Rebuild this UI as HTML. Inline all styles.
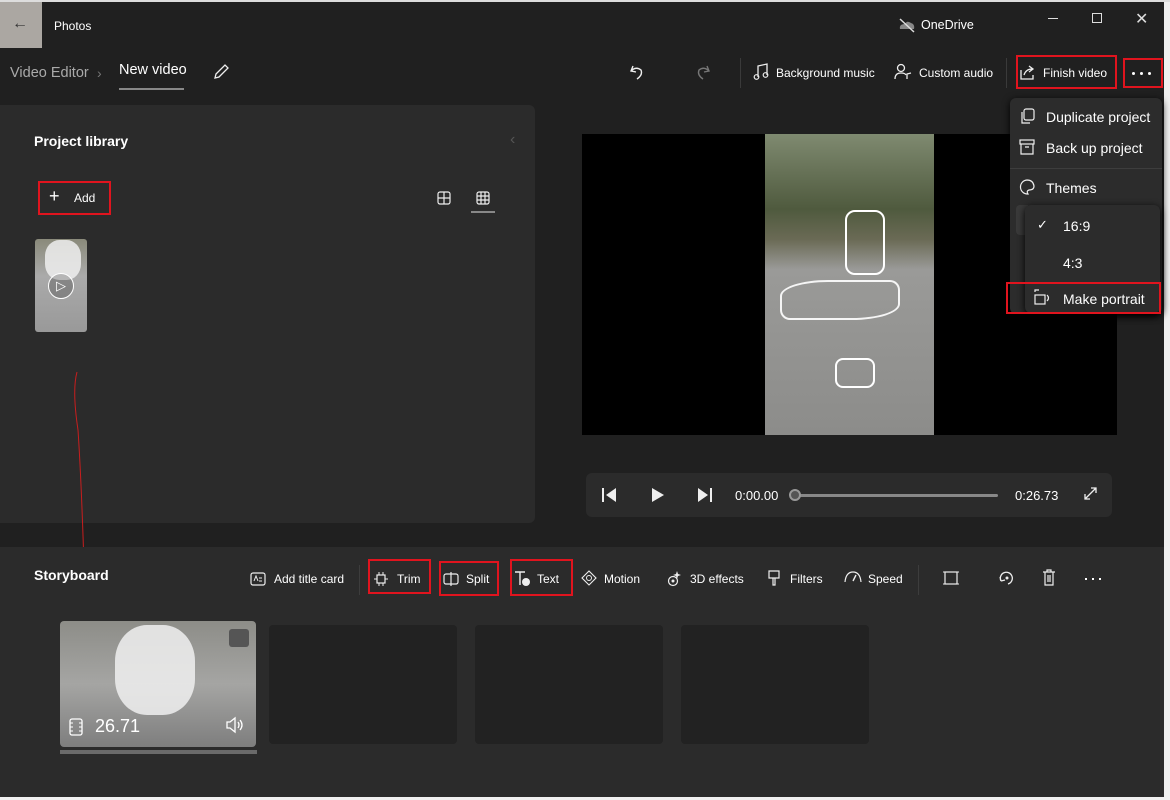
<!DOCTYPE html>
<html><head><meta charset="utf-8"><style>
*{margin:0;padding:0;box-sizing:border-box}
body{width:1170px;height:800px;background:#f0f0f0;font-family:"Liberation Sans",sans-serif;color:#fff;position:relative;overflow:hidden}
.win{position:absolute;left:0;top:2px;width:1164px;height:795px;background:#202020}
.a{position:absolute}
.t{position:absolute;font-size:12px;white-space:nowrap}
.red{position:absolute;border:2px solid #e0141e}
svg{position:absolute}
</style></head><body>
<div class="win"></div>
<div class="a" style="left:0;top:0;width:1170px;height:2px;background:#ddd"></div>
<div class="a" style="left:0;top:2px;width:42px;height:46px;background:#aba7a2"></div>
<div class="t" style="left:12px;top:15px;font-size:16px;color:#333">←</div>
<div class="t" style="left:54px;top:19px;font-size:12px">Photos</div>
<svg style="left:898px;top:17px" width="18" height="16"><path d="M2 12 Q1 7 7 7 Q9 3 13 6 Q17 7 16 12Z" fill="#888"/><line x1="2" y1="2" x2="16" y2="15" stroke="#ddd" stroke-width="1.5"/></svg>
<div class="t" style="left:921px;top:18px;font-size:12.5px">OneDrive</div>
<div class="a" style="left:1048px;top:18px;width:10px;height:1px;background:#ddd"></div>
<div class="a" style="left:1092px;top:13px;width:10px;height:10px;border:1px solid #ddd"></div>
<div class="t" style="left:1135px;top:9px;font-size:16px;color:#ddd">✕</div>
<div class="t" style="left:10px;top:65px;font-size:14.5px;color:#aaa">Video Editor</div>
<div class="t" style="left:97px;top:65px;font-size:14px;color:#777">›</div>
<div class="t" style="left:119px;top:62px;font-size:14.5px">New video</div>
<div class="a" style="left:119px;top:88px;width:65px;height:2px;background:#888"></div>
<svg style="left:212px;top:63px" width="18" height="18"><path d="M3 15 L4 11 L13 2 L16 5 L7 14Z" fill="none" stroke="#eee" stroke-width="1.3"/></svg>
<svg style="left:628px;top:63px" width="18" height="18"><path d="M5 3 L3 8 L8 9 M3 8 Q8 3 13 7 Q15 12 9 16" fill="none" stroke="#eee" stroke-width="1.4"/></svg>
<svg style="left:694px;top:63px" width="18" height="18"><path d="M13 3 L15 8 L10 9 M15 8 Q10 3 5 7 Q3 12 9 16" fill="none" stroke="#777" stroke-width="1.4"/></svg>
<div class="a" style="left:740px;top:58px;width:1px;height:30px;background:#3a3a3a"></div>
<svg style="left:753px;top:63px" width="16" height="18"><path d="M5 14 V3 L14 1 V12" fill="none" stroke="#eee" stroke-width="1.3"/><circle cx="3.5" cy="14" r="2.3" fill="none" stroke="#eee" stroke-width="1.2"/><circle cx="12.5" cy="12" r="2.3" fill="none" stroke="#eee" stroke-width="1.2"/></svg>
<div class="t" style="left:776px;top:66px">Background music</div>
<svg style="left:894px;top:63px" width="18" height="18"><circle cx="7" cy="5" r="3.5" fill="none" stroke="#eee" stroke-width="1.3"/><path d="M1 16 Q1 10 7 10 Q11 10 12 12" fill="none" stroke="#eee" stroke-width="1.3"/><path d="M13 16 V11 L17 10" fill="none" stroke="#eee" stroke-width="1.3"/></svg>
<div class="t" style="left:919px;top:66px">Custom audio</div>
<div class="a" style="left:1006px;top:58px;width:1px;height:30px;background:#3a3a3a"></div>
<div class="red" style="left:1016px;top:55px;width:101px;height:34px"></div>
<svg style="left:1019px;top:64px" width="17" height="17"><path d="M2 6 V15 H14 V11 M5 11 Q7 5 13 5 M10 2 L14 5 L10 8" fill="none" stroke="#eee" stroke-width="1.3"/></svg>
<div class="t" style="left:1043px;top:66px">Finish video</div>
<div class="red" style="left:1123px;top:58px;width:40px;height:30px"></div>
<div class="a" style="left:1132px;top:72px;width:3px;height:3px;background:#fff;border-radius:50%"></div>
<div class="a" style="left:1140px;top:72px;width:3px;height:3px;background:#fff;border-radius:50%"></div>
<div class="a" style="left:1148px;top:72px;width:3px;height:3px;background:#fff;border-radius:50%"></div>

<div class="a" style="left:0;top:105px;width:535px;height:418px;background:#2b2b2b;border-radius:0 6px 6px 0"></div>
<div class="t" style="left:34px;top:133px;font-size:14px;font-weight:bold">Project library</div>
<div class="t" style="left:510px;top:131px;font-size:16px;color:#555">‹</div>
<div class="red" style="left:38px;top:181px;width:73px;height:34px"></div>
<div class="t" style="left:49px;top:186px;font-size:18px">+</div>
<div class="t" style="left:74px;top:191px">Add</div>
<svg style="left:437px;top:191px" width="14" height="14"><rect x="1" y="1" width="12" height="12" rx="2" fill="none" stroke="#eee" stroke-width="1.2"/><path d="M7 1V13M1 7H13" stroke="#eee" stroke-width="1.2"/></svg>
<svg style="left:476px;top:191px" width="14" height="14"><rect x="1" y="1" width="12" height="12" rx="2" fill="none" stroke="#eee" stroke-width="1.2"/><path d="M5 1V13M9 1V13M1 5H13M1 9H13" stroke="#eee" stroke-width="1.2"/></svg>
<div class="a" style="left:471px;top:211px;width:24px;height:2px;background:#888"></div>
<div class="a" style="left:35px;top:239px;width:52px;height:93px;background:linear-gradient(#8a8a7a,#aaa 40%,#999);border-radius:3px"></div>
<div class="a" style="left:45px;top:240px;width:36px;height:40px;background:#eee;border-radius:40%;opacity:.85"></div>
<div class="a" style="left:48px;top:273px;width:26px;height:26px;border-radius:50%;border:1.5px solid #fff;background:rgba(0,0,0,.2)"></div>
<div class="t" style="left:56px;top:278px;font-size:13px">▷</div>
<svg style="left:60px;top:370px" width="70" height="250"><path d="M17 2 Q12 20 18 60 Q22 120 25 230 Q20 245 10 230 M25 240 Q45 225 65 215" fill="none" stroke="#c81e1e" stroke-width="1"/></svg>

<div class="a" style="left:582px;top:134px;width:535px;height:301px;background:#000"></div>
<div class="a" style="left:765px;top:134px;width:169px;height:301px;background:linear-gradient(#7f8a70 0%,#4f5a3e 25%,#6a6a55 35%,#9a9a98 45%,#8c8c8a 100%)"></div>
<div class="a" style="left:780px;top:280px;width:120px;height:40px;border:2px solid #fff;border-radius:40% 10px;opacity:.9"></div>
<div class="a" style="left:845px;top:210px;width:40px;height:65px;border:2px solid #fff;border-radius:10px"></div>
<div class="a" style="left:835px;top:358px;width:40px;height:30px;border:2px solid #fff;border-radius:8px"></div>
<div class="a" style="left:586px;top:473px;width:526px;height:44px;background:#2b2b2b;border-radius:6px"></div>
<svg style="left:601px;top:487px" width="16" height="16"><path d="M2 1V15" stroke="#eee" stroke-width="2"/><path d="M15 1 L5 8 L15 15Z" fill="#eee"/></svg>
<svg style="left:650px;top:487px" width="16" height="16"><path d="M2 1 L14 8 L2 15Z" fill="#eee"/></svg>
<svg style="left:697px;top:487px" width="16" height="16"><path d="M14 1V15" stroke="#eee" stroke-width="2"/><path d="M1 1 L11 8 L1 15Z" fill="#eee"/></svg>
<div class="t" style="left:735px;top:488px;font-size:13px">0:00.00</div>
<div class="a" style="left:796px;top:494px;width:202px;height:3px;background:#888;border-radius:2px"></div>
<div class="a" style="left:789px;top:489px;width:12px;height:12px;background:#555;border-radius:50%;border:2px solid #999"></div>
<div class="t" style="left:1015px;top:488px;font-size:13px">0:26.73</div>
<svg style="left:1083px;top:486px" width="15" height="15"><path d="M2 13 L13 2 M8 2H13V7 M2 8V13H7" fill="none" stroke="#eee" stroke-width="1.3"/></svg>

<div class="a" style="left:1010px;top:98px;width:152px;height:216px;background:#2c2c2c;border-radius:6px;box-shadow:0 2px 8px #000"></div>
<svg style="left:1019px;top:108px" width="16" height="16"><rect x="5" y="1" width="10" height="11" rx="2" fill="none" stroke="#eee" stroke-width="1.2"/><path d="M3 4 V15 H11" fill="none" stroke="#eee" stroke-width="1.2"/></svg>
<div class="t" style="left:1046px;top:109px;font-size:14px">Duplicate project</div>
<svg style="left:1019px;top:139px" width="16" height="16"><rect x="1" y="1" width="14" height="4" fill="none" stroke="#eee" stroke-width="1.2"/><path d="M2 5 V15 H14 V5 M6 8H10" fill="none" stroke="#eee" stroke-width="1.2"/></svg>
<div class="t" style="left:1046px;top:140px;font-size:14px">Back up project</div>
<div class="a" style="left:1010px;top:168px;width:152px;height:1px;background:#3d3d3d"></div>
<svg style="left:1019px;top:179px" width="16" height="16"><path d="M8 1 A7 7 0 1 0 9 15 Q7 12 10 11 Q15 11 15 7 Q14 1 8 1Z" fill="none" stroke="#eee" stroke-width="1.2"/></svg>
<div class="t" style="left:1046px;top:180px;font-size:14px">Themes</div>
<div class="a" style="left:1016px;top:205px;width:12px;height:30px;background:#3a3a3a;border-radius:4px 0 0 4px"></div>
<div class="a" style="left:1025px;top:205px;width:135px;height:108px;background:#2c2c2c;border-radius:6px;box-shadow:0 2px 8px #000"></div>
<div class="t" style="left:1037px;top:217px;font-size:13px">✓</div>
<div class="t" style="left:1063px;top:218px;font-size:14px">16:9</div>
<div class="t" style="left:1063px;top:255px;font-size:14px">4:3</div>
<div class="red" style="left:1006px;top:282px;width:155px;height:32px"></div>
<svg style="left:1034px;top:289px" width="18" height="16"><rect x="1" y="6" width="10" height="9" fill="none" stroke="#eee" stroke-width="1.2"/><path d="M1 3 V1 H5 M13 6 Q16 9 13 12" fill="none" stroke="#eee" stroke-width="1.2"/></svg>
<div class="t" style="left:1063px;top:291px;font-size:14px">Make portrait</div>

<div class="a" style="left:0;top:547px;width:1164px;height:250px;background:#2b2b2b"></div>
<div class="t" style="left:34px;top:567px;font-size:14px;font-weight:bold">Storyboard</div>
<svg style="left:250px;top:572px" width="16" height="14"><rect x="1" y="1" width="14" height="12" rx="2" fill="none" stroke="#eee" stroke-width="1.2"/><path d="M4 9 L6 4 L8 9 M9 6H12M9 9H12" fill="none" stroke="#eee" stroke-width="1"/></svg>
<div class="t" style="left:274px;top:572px">Add title card</div>
<div class="a" style="left:359px;top:565px;width:1px;height:30px;background:#3d3d3d"></div>
<div class="red" style="left:368px;top:559px;width:63px;height:35px"></div>
<svg style="left:373px;top:571px" width="16" height="16"><rect x="4" y="4" width="8" height="8" fill="none" stroke="#eee" stroke-width="1.2"/><path d="M1 8H4M12 8H15M6 1V4M10 1V4M6 12V15M10 12V15" stroke="#eee" stroke-width="1"/></svg>
<div class="t" style="left:397px;top:572px">Trim</div>
<div class="red" style="left:439px;top:561px;width:60px;height:35px"></div>
<svg style="left:443px;top:571px" width="16" height="16"><rect x="1" y="3" width="14" height="10" rx="2" fill="none" stroke="#eee" stroke-width="1.2"/><path d="M8 1V15" stroke="#eee" stroke-width="1.2"/></svg>
<div class="t" style="left:466px;top:572px">Split</div>
<div class="red" style="left:510px;top:559px;width:63px;height:37px"></div>
<svg style="left:514px;top:570px" width="18" height="18"><path d="M1 2H11M6 2V15" stroke="#eee" stroke-width="1.4"/><circle cx="12" cy="12" r="4" fill="#eee"/></svg>
<div class="t" style="left:537px;top:572px">Text</div>
<svg style="left:581px;top:570px" width="16" height="16"><path d="M8 1 L15 8 L8 15 L1 8Z" fill="none" stroke="#eee" stroke-width="1.1"/><circle cx="8" cy="8" r="2.5" fill="none" stroke="#eee"/></svg>
<div class="t" style="left:604px;top:572px">Motion</div>
<svg style="left:667px;top:569px" width="16" height="18"><circle cx="6" cy="12" r="4.5" fill="none" stroke="#eee" stroke-width="1.2"/><circle cx="6" cy="12" r="1.5" fill="#eee"/><path d="M10 2 L11 5 L14 6 L11 7 L10 10 L9 7 L6 6 L9 5Z" fill="#eee"/></svg>
<div class="t" style="left:690px;top:572px">3D effects</div>
<svg style="left:767px;top:570px" width="14" height="17"><path d="M2 1H12V8H2Z M6 8V15H8V8" fill="none" stroke="#eee" stroke-width="1.2"/></svg>
<div class="t" style="left:790px;top:572px">Filters</div>
<svg style="left:844px;top:570px" width="18" height="14"><path d="M1 12 Q2 2 9 2 Q16 2 17 12" fill="none" stroke="#eee" stroke-width="1.2"/><path d="M9 11 L12 5" stroke="#eee" stroke-width="1.4"/></svg>
<div class="t" style="left:868px;top:572px">Speed</div>
<div class="a" style="left:918px;top:565px;width:1px;height:30px;background:#3d3d3d"></div>
<svg style="left:942px;top:569px" width="18" height="18"><rect x="3" y="3" width="12" height="12" fill="none" stroke="#eee" stroke-width="1.2"/><path d="M1 3H17M1 15H17" stroke="#eee"/></svg>
<svg style="left:997px;top:569px" width="18" height="18"><path d="M4 12 A6 6 0 1 1 11 15 M4 12 L3 8 M4 12 L8 11" fill="none" stroke="#eee" stroke-width="1.3"/><circle cx="10" cy="9" r="1.5" fill="#eee"/></svg>
<svg style="left:1042px;top:569px" width="14" height="17"><path d="M1 3H13M5 3V1H9V3M3 3V16H11V3M6 6V13M8 6V13" fill="none" stroke="#eee" stroke-width="1.2"/></svg>
<div class="a" style="left:1085px;top:578px;width:2px;height:2px;background:#fff"></div>
<div class="a" style="left:1092px;top:578px;width:2px;height:2px;background:#fff"></div>
<div class="a" style="left:1099px;top:578px;width:2px;height:2px;background:#fff"></div>

<div class="a" style="left:60px;top:621px;width:196px;height:126px;background:linear-gradient(#8d8d88,#a5a5a3 50%,#7e7e7e);border-radius:4px"></div>
<div class="a" style="left:115px;top:625px;width:80px;height:90px;background:#f0f0f0;border-radius:40%;opacity:.85"></div>
<div class="a" style="left:229px;top:629px;width:20px;height:18px;background:#555;border-radius:3px"></div>
<svg style="left:68px;top:718px" width="16" height="18"><rect x="2" y="1" width="12" height="16" rx="2" fill="none" stroke="#fff" stroke-width="1.3"/><path d="M2 5H5M2 9H5M2 13H5M11 5H14M11 9H14M11 13H14" stroke="#fff"/></svg>
<div class="t" style="left:95px;top:716px;font-size:18px">26.71</div>
<svg style="left:225px;top:716px" width="20" height="18"><path d="M2 6H5L10 2V16L5 12H2Z" fill="none" stroke="#fff" stroke-width="1.3"/><path d="M13 6 Q15 9 13 12 M15 4 Q19 9 15 14" fill="none" stroke="#fff" stroke-width="1.3"/></svg>
<div class="a" style="left:60px;top:750px;width:197px;height:4px;background:#6a6a6a"></div>
<div class="a" style="left:269px;top:625px;width:188px;height:119px;background:#222;border-radius:4px"></div>
<div class="a" style="left:475px;top:625px;width:188px;height:119px;background:#222;border-radius:4px"></div>
<div class="a" style="left:681px;top:625px;width:188px;height:119px;background:#222;border-radius:4px"></div>
</body></html>
